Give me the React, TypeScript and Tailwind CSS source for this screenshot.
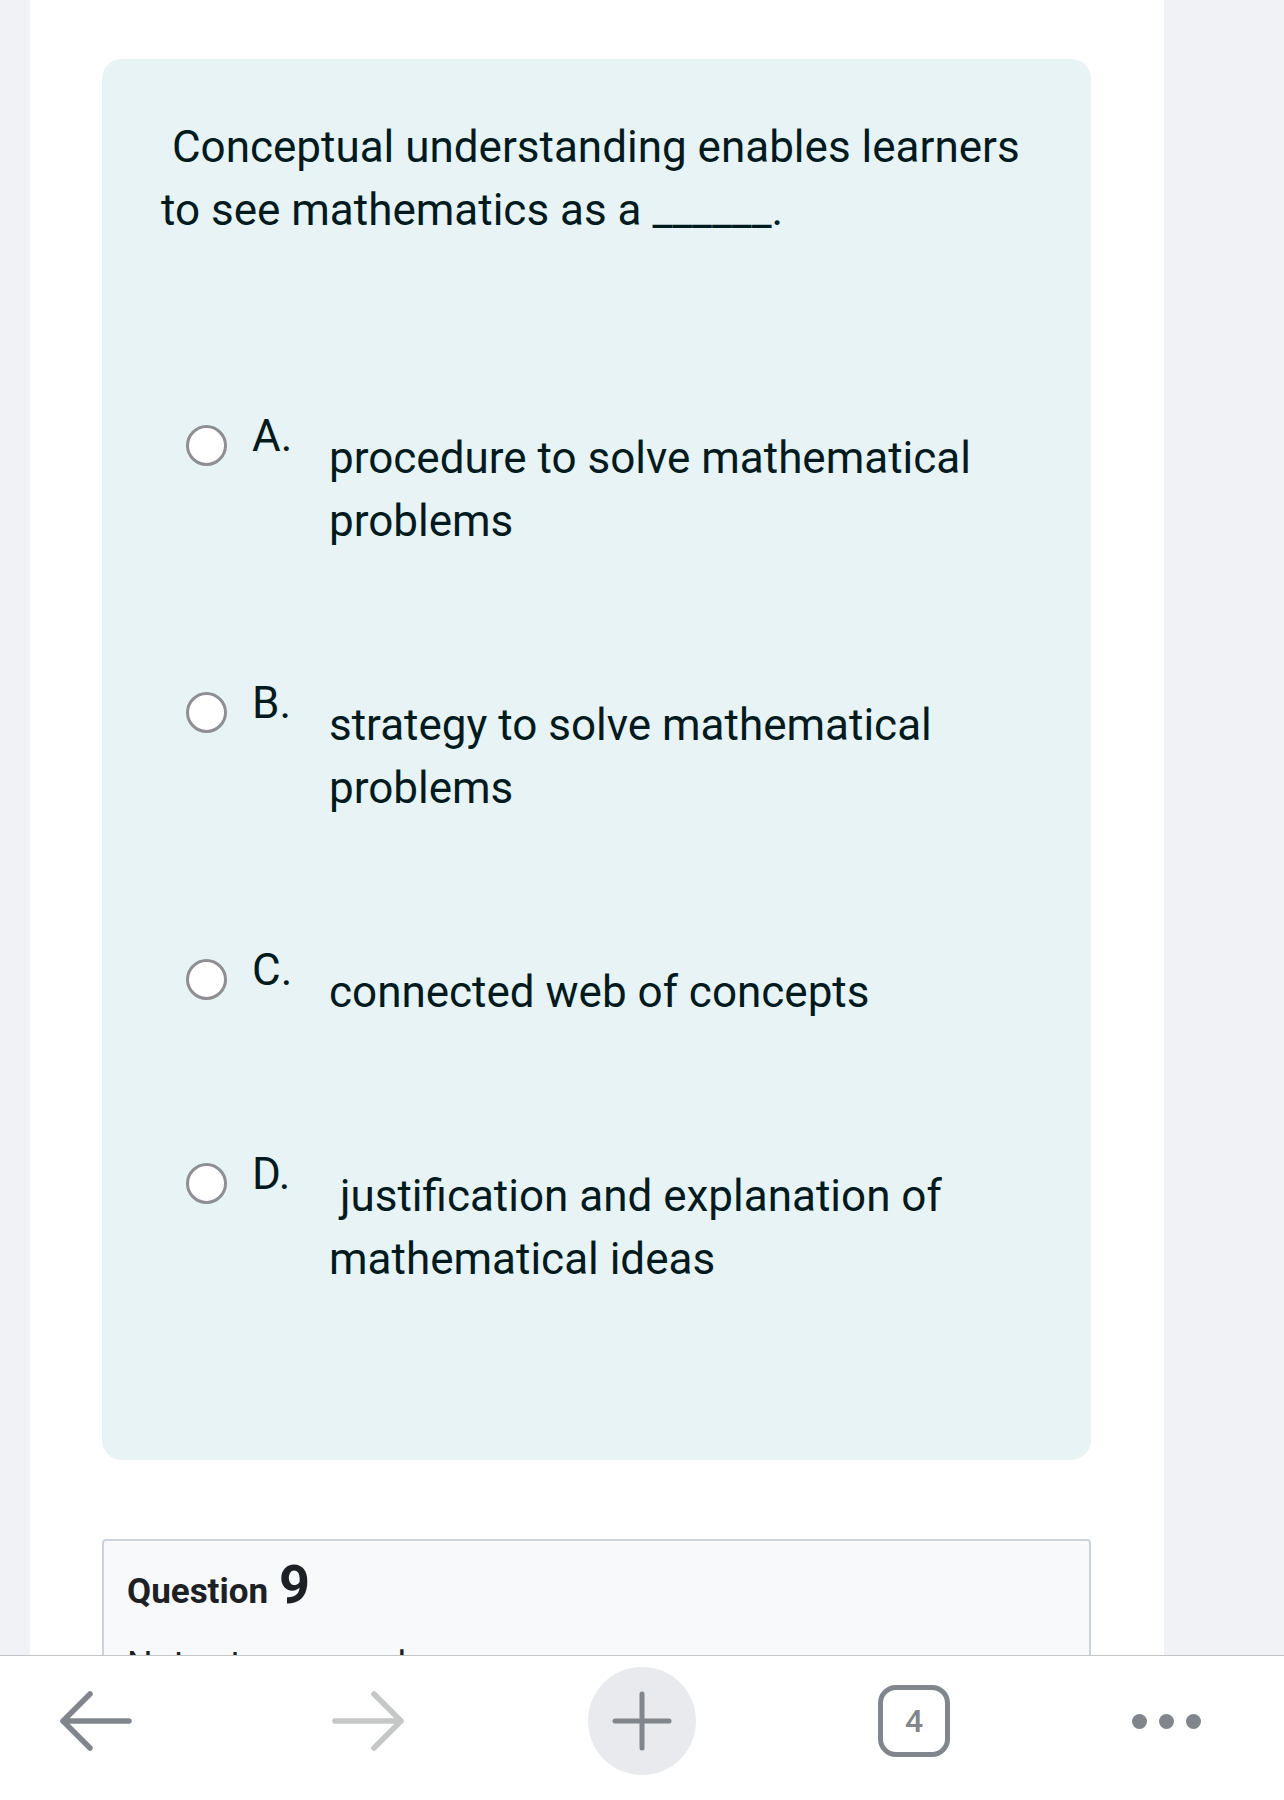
import React from 'react'

const options = [
  { label: 'A.', text: 'procedure to solve mathematical problems' },
  { label: 'B.', text: 'strategy to solve mathematical problems' },
  { label: 'C.', text: 'connected web of concepts' },
  { label: 'D.', text: '\u00a0justification and explanation of mathematical ideas' },
]

function Option({ label, text }: { label: string; text: string }) {
  return (
    <div className="flex items-start">
      <div className="mt-[20px] h-[41px] w-[41px] flex-shrink-0 rounded-full border-[3px] border-[#8e8e93] bg-white" />
      <span className="ml-[25px] w-[77px] flex-shrink-0 text-[44px] leading-[63px]">{label}</span>
      <p className="mt-[22px] flex-1 text-[44px] leading-[63px]">{text}</p>
    </div>
  )
}

function BackArrow({ color }: { color: string }) {
  return (
    <svg width="72" height="60" viewBox="0 0 72 60" fill="none" stroke={color} strokeWidth="5.5" strokeLinecap="round" strokeLinejoin="round">
      <path d="M3 30H69M3 30L30 3M3 30L30 57" />
    </svg>
  )
}

function ForwardArrow({ color }: { color: string }) {
  return (
    <svg width="72" height="60" viewBox="0 0 72 60" fill="none" stroke={color} strokeWidth="5.5" strokeLinecap="round" strokeLinejoin="round">
      <path d="M69 30H3M69 30L42 3M69 30L42 57" />
    </svg>
  )
}

export default function App() {
  return (
    <div className="flex h-[1800px] w-[1284px] flex-col bg-white font-['Roboto',sans-serif]">
      <div className="flex h-[1655px] overflow-hidden bg-[#f1f2f6] pl-[30px]">
        <div className="w-[1134px] bg-white pl-[72px] pt-[59px]">
          <div className="w-[989px] rounded-[20px] bg-[#e7f3f5] pb-[169px] pl-[59px] pr-[51px] pt-[57px] text-[#001a1e]">
            <p className="text-[44px] leading-[63px]">
              {'\u00a0'}Conceptual understanding enables learners to see mathematics as a ______.
            </p>
            <div className="mt-[163px] flex flex-col gap-[119px] pl-[25px]">
              {options.map(o => (
                <Option key={o.label} label={o.label} text={o.text} />
              ))}
            </div>
          </div>

          <div className="mt-[79px] w-[989px] rounded-[4px] border-2 border-[#cdd3da] bg-[#f8f9fa] pl-[23px] pt-[11px] text-[#1d2125]">
            <h3 className="flex items-baseline font-bold leading-[66px]">
              <span className="text-[35px]">Question</span>
              <span className="ml-[11px] text-[54px]">9</span>
            </h3>
            <div className="mt-[13px] text-[36px] leading-[54px]">Not yet answered</div>
          </div>
        </div>
      </div>

      <nav className="flex h-[145px] items-start border-t border-[#c4c4c4] bg-white pl-[42px] pt-[11px]">
        <div className="flex h-[108px] w-[108px] items-center justify-center">
          <BackArrow color="#80868b" />
        </div>
        <div className="ml-[164px] flex h-[108px] w-[108px] items-center justify-center">
          <ForwardArrow color="#c4c7c5" />
        </div>
        <div className="ml-[166px] flex h-[108px] w-[108px] items-center justify-center rounded-full bg-[#e8eaed]">
          <svg width="60" height="60" viewBox="0 0 60 60" fill="none" stroke="#80868b" strokeWidth="5" strokeLinecap="round">
            <path d="M30 3V57M3 30H57" />
          </svg>
        </div>
        <div className="ml-[164px] flex h-[108px] w-[108px] items-center justify-center">
          <div className="flex h-[72px] w-[72px] items-center justify-center rounded-[18px] border-[5px] border-[#80868b] text-[32px] font-medium text-[#80868b]">
            4
          </div>
        </div>
        <div className="ml-[144px] flex h-[108px] w-[108px] items-center justify-center gap-[12px]">
          <span className="h-[15px] w-[15px] rounded-full bg-[#80868b]" />
          <span className="h-[15px] w-[15px] rounded-full bg-[#80868b]" />
          <span className="h-[15px] w-[15px] rounded-full bg-[#80868b]" />
        </div>
      </nav>
    </div>
  )
}
